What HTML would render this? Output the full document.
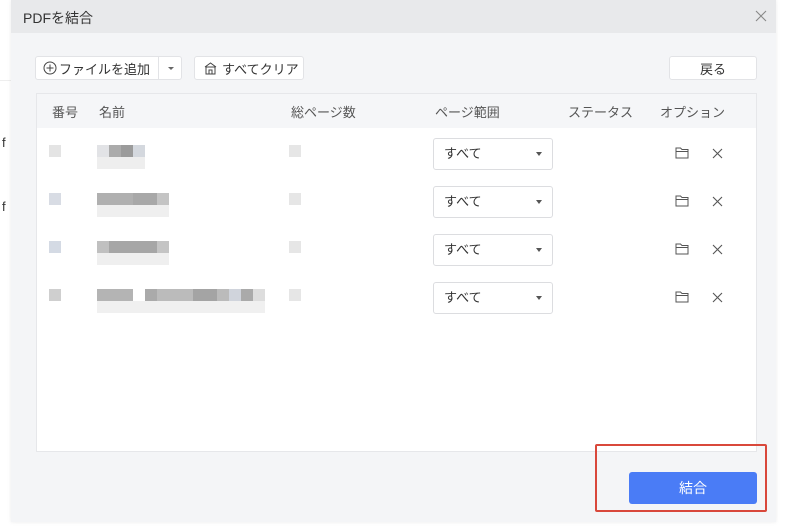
<!DOCTYPE html><html><head><meta charset="utf-8"><style>
*{margin:0;padding:0;box-sizing:border-box}
body{width:795px;height:532px;background:#fff;position:relative;overflow:hidden;font-family:"Liberation Sans","Noto Sans CJK JP",sans-serif;color:#333;font-size:13px}
.a{position:absolute}
.dlg{left:11px;top:0;width:765px;height:522px;background:#f4f5f7;box-shadow:0 0 4px rgba(0,0,0,.08)}
.hd{left:11px;top:0;width:765px;height:33px;background:#e8e9eb}
.btn{background:#fff;border:1px solid #e2e3e6;border-radius:3px;font-size:13px;color:#333;display:flex;align-items:center}
.th{top:102px;font-size:13px;color:#555}
.sel{left:433px;width:120px;height:32px;background:#fff;border:1px solid #dcdde0;border-radius:3px;font-size:13px;padding-left:10px;line-height:30px}
.sel:after{content:"";position:absolute;right:10px;top:13px;border:3.5px solid transparent;border-top:4px solid #555}
.b{position:absolute;height:12px}
</style></head><body>
<div class="a" style="left:0;top:80px;width:11px;height:1px;background:#eee"></div>
<div class="a" style="left:2px;top:135px;font-size:13px">f</div>
<div class="a" style="left:2px;top:199px;font-size:13px">f</div>
<div class="a dlg"></div>
<div class="a hd"></div>
<div class="a" style="left:23px;top:8px;font-size:14px;color:#333">PDFを結合</div>
<svg class="a" style="left:755px;top:10px" width="12" height="12"><path d="M1 1L11 11M11 1L1 11" stroke="#888" stroke-width="1.1"/></svg>
<div class="a btn" style="left:35px;top:56px;width:147px;height:24px">
<svg style="margin-left:7px" width="14" height="14"><circle cx="7" cy="7" r="6" fill="none" stroke="#444"/><path d="M7 3.5V10.5M3.5 7H10.5" stroke="#444"/></svg>
<span style="margin-left:2px">ファイルを追加</span>
<span style="position:absolute;left:122px;top:0;width:1px;height:22px;background:#e2e3e6"></span>
<span style="position:absolute;left:132px;top:10px;border:3px solid transparent;border-top:3.5px solid #666"></span></div>
<div class="a btn" style="left:194px;top:56px;width:110px;height:24px">
<svg style="margin-left:9px" width="13" height="13"><path d="M2 5H11V12H2Z M1 5L6.5 1 12 5 M5 12V8H8V12" fill="none" stroke="#444"/></svg>
<span style="margin-left:5px">すべてクリア</span></div>
<div class="a btn" style="left:669px;top:56px;width:88px;height:24px;justify-content:center">戻る</div>
<div class="a" style="left:36px;top:93px;width:721px;height:359px;background:#fff;border:1px solid #e6e7ea"></div>
<div class="a" style="left:37px;top:94px;width:719px;height:34px;background:#f5f6f8"></div>
<div class="a th" style="left:52px">番号</div>
<div class="a th" style="left:99px">名前</div>
<div class="a th" style="left:291px">総ページ数</div>
<div class="a th" style="left:435px">ページ範囲</div>
<div class="a th" style="left:568px">ステータス</div>
<div class="a th" style="left:660px">オプション</div>

<!-- rows -->
<div class="b" style="left:49px;top:145px;width:12px;background:#e4e4e4"></div>
<div class="b" style="left:289px;top:145px;width:12px;background:#e6e6e6"></div>
<div class="b" style="left:97px;top:145px;width:48px;background:linear-gradient(90deg,#e2e3e6 25%,#ababab 25% 50%,#9b9b9b 50% 75%,#d4d8de 75%)"></div>
<div class="b" style="left:97px;top:157px;width:48px;background:#eeeeee"></div>

<div class="b" style="left:49px;top:193px;width:12px;background:#d8dce4"></div>
<div class="b" style="left:289px;top:193px;width:12px;background:#e6e6e6"></div>
<div class="b" style="left:97px;top:193px;width:72px;background:linear-gradient(90deg,#b0b0b0 50%,#a8a8a8 50% 83%,#c4c4c4 83%)"></div>
<div class="b" style="left:97px;top:205px;width:72px;background:#efefef"></div>

<div class="b" style="left:49px;top:241px;width:12px;background:#d4dae4"></div>
<div class="b" style="left:289px;top:241px;width:12px;background:#e6e6e6"></div>
<div class="b" style="left:97px;top:241px;width:72px;background:linear-gradient(90deg,#c0c0c0 17%,#a6a6a6 17% 83%,#c4c4c4 83%)"></div>
<div class="b" style="left:97px;top:253px;width:72px;background:#efefef"></div>

<div class="b" style="left:49px;top:289px;width:12px;background:#cfcfcf"></div>
<div class="b" style="left:289px;top:289px;width:12px;background:#e6e6e6"></div>
<div class="b" style="left:97px;top:289px;width:36px;background:#b4b4b4"></div>
<div class="b" style="left:145px;top:289px;width:120px;background:linear-gradient(90deg,#aaa 10%,#bbb 10% 40%,#a4a4a4 40% 60%,#bbb 60% 70%,#d0d4dc 70% 80%,#aaa 80% 90%,#ddd 90%)"></div>
<div class="b" style="left:97px;top:301px;width:168px;background:#f0f0f0"></div>

<div class="a sel" style="top:138px">すべて</div>
<div class="a sel" style="top:186px">すべて</div>
<div class="a sel" style="top:234px">すべて</div>
<div class="a sel" style="top:282px">すべて</div>

<svg class="a" style="left:675px;top:147px" width="14" height="12"><path d="M1 1H5.5L7 2.5H13V11H1Z M1 4.5H13" fill="none" stroke="#555"/></svg>
<svg class="a" style="left:712px;top:148px" width="11" height="11"><path d="M1 1L10 10M10 1L1 10" stroke="#555" stroke-width="1.1"/></svg>
<svg class="a" style="left:675px;top:195px" width="14" height="12"><path d="M1 1H5.5L7 2.5H13V11H1Z M1 4.5H13" fill="none" stroke="#555"/></svg>
<svg class="a" style="left:712px;top:196px" width="11" height="11"><path d="M1 1L10 10M10 1L1 10" stroke="#555" stroke-width="1.1"/></svg>
<svg class="a" style="left:675px;top:243px" width="14" height="12"><path d="M1 1H5.5L7 2.5H13V11H1Z M1 4.5H13" fill="none" stroke="#555"/></svg>
<svg class="a" style="left:712px;top:244px" width="11" height="11"><path d="M1 1L10 10M10 1L1 10" stroke="#555" stroke-width="1.1"/></svg>
<svg class="a" style="left:675px;top:291px" width="14" height="12"><path d="M1 1H5.5L7 2.5H13V11H1Z M1 4.5H13" fill="none" stroke="#555"/></svg>
<svg class="a" style="left:712px;top:292px" width="11" height="11"><path d="M1 1L10 10M10 1L1 10" stroke="#555" stroke-width="1.1"/></svg>

<div class="a" style="left:629px;top:472px;width:128px;height:32px;background:#4a7cf6;border-radius:3px;color:#fff;font-size:14px;text-align:center;line-height:32px">結合</div>
<div class="a" style="left:595px;top:444px;width:172px;height:68px;border:2px solid #d9483b;border-radius:2px"></div>
</body></html>
